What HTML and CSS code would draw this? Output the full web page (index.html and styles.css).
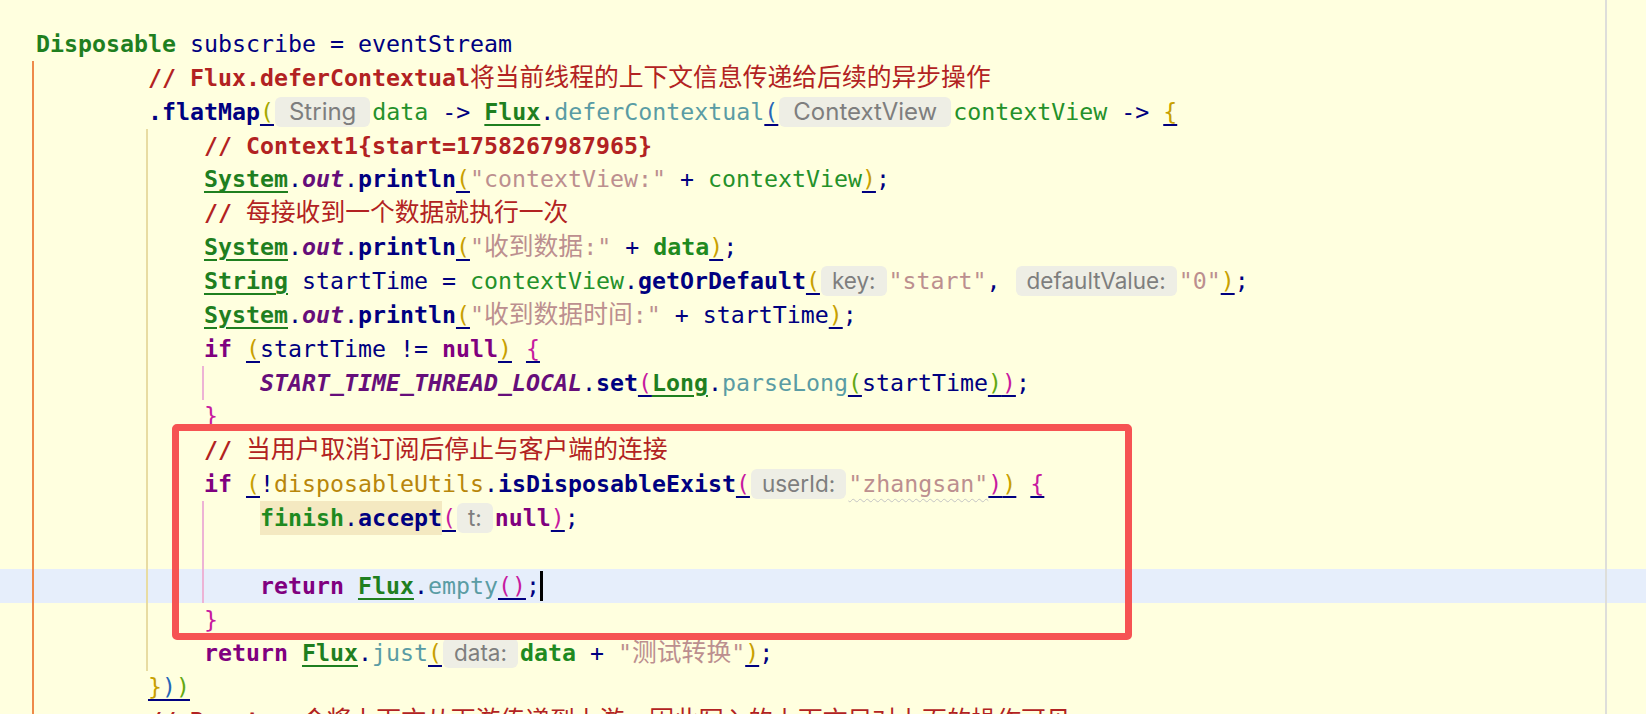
FILE: index.html
```html
<!DOCTYPE html>
<html lang="zh">
<head>
<meta charset="utf-8">
<title>Editor</title>
<link rel="stylesheet" href="styles.css">
</head>
<body>
<div class="editor">
  <div class="code">
    <div class="ln"><span class="clsn">Disposable</span> subscribe = eventStream</div>
    <div class="ln">        <span class="cm">// Flux.deferContextual<span class="cjk">将当前线程的上下文信息传递给后续的异步操作</span></span></div>
    <div class="ln">        <span class="mth">.flatMap</span><span class="p po">(</span><span class="inlay type">String</span><span class="prm">data</span> -&gt; <span class="cls">Flux</span>.<span class="smth">deferContextual</span><span class="p pb">(</span><span class="inlay type">ContextView</span><span class="prm">contextView</span> -&gt; <span class="p pg">{</span></div>
    <div class="ln">            <span class="cm">// Context1{start=1758267987965}</span></div>
    <div class="ln">            <span class="cls">System</span>.<span class="out">out</span>.<span class="mth">println</span><span class="p pg">(</span><span class="str">"contextView:"</span> + <span class="prm">contextView</span><span class="p pg">)</span>;</div>
    <div class="ln">            <span class="cm">// <span class="cjk">每接收到一个数据就执行一次</span></span></div>
    <div class="ln">            <span class="cls">System</span>.<span class="out">out</span>.<span class="mth">println</span><span class="p pg">(</span><span class="str">"<span class="cjk">收到数据</span>:"</span> + <span class="prmb">data</span><span class="p pg">)</span>;</div>
    <div class="ln">            <span class="cls">String</span> startTime = <span class="prm">contextView</span>.<span class="mth">getOrDefault</span><span class="p pg">(</span><span class="inlay">key:</span><span class="str">"start"</span>, <span class="inlay">defaultValue:</span><span class="str">"0"</span><span class="p pg">)</span>;</div>
    <div class="ln">            <span class="cls">System</span>.<span class="out">out</span>.<span class="mth">println</span><span class="p pg">(</span><span class="str">"<span class="cjk">收到数据时间</span>:"</span> + startTime<span class="p pg">)</span>;</div>
    <div class="ln">            <span class="kw">if</span> <span class="p pg">(</span>startTime != <span class="kw">null</span><span class="p pg">)</span> <span class="p pm">{</span></div>
    <div class="ln">                <span class="const">START_TIME_THREAD_LOCAL</span>.<span class="mth">set</span><span class="p pm">(</span><span class="cls">Long</span>.<span class="smth">parseLong</span><span class="p pgr">(</span>startTime<span class="p pgr">)</span><span class="p pm">)</span>;</div>
    <div class="ln">            <span class="pm">}</span></div>
    <div class="ln">            <span class="cm">// <span class="cjk">当用户取消订阅后停止与客户端的连接</span></span></div>
    <div class="ln">            <span class="kw">if</span> <span class="p pg">(</span>!<span class="fld">disposableUtils</span>.<span class="mth">isDisposableExist</span><span class="p pm">(</span><span class="inlay">userId:</span><span class="str wavy">"zhangsan"</span><span class="p pm">)</span><span class="p pg">)</span> <span class="p pm">{</span></div>
    <div class="ln">                <span class="hl"><span class="prmb">finish</span>.<span class="mth">accept</span></span><span class="p pm">(</span><span class="inlay">t:</span><span class="kw">null</span><span class="p pm">)</span>;</div>
    <div class="ln"> </div>
    <div class="ln current">                <span class="kw">return</span> <span class="cls">Flux</span>.<span class="smth">empty</span><span class="p pm">()</span>;<span class="caret"></span></div>
    <div class="ln">            <span class="pm">}</span></div>
    <div class="ln">            <span class="kw">return</span> <span class="cls">Flux</span>.<span class="smth">just</span><span class="p pg">(</span><span class="inlay">data:</span><span class="prmb">data</span> + <span class="str">"<span class="cjk">测试转换</span>"</span><span class="p pg">)</span>;</div>
    <div class="ln">        <span class="p pg">}</span><span class="p pb">)</span><span class="p pgr">)</span></div>
    <div class="ln">        <span class="cm">// Reactor <span class="cjk">会将上下文从下游传递到上游，因此写入的上下文只对上面的操作可见</span></span></div>
  </div>
  <div class="guide g-orange"></div>
  <div class="guide g-khaki"></div>
  <div class="guide g-pink g-pink1"></div>
  <div class="guide g-pink g-pink2"></div>
  <div class="margin-line"></div>
  <div class="annot"></div>
</div>
</body>
</html>
```

FILE: styles.css
```css
html, body {
  margin: 0;
  padding: 0;
  background: #FFFFDF;
}

.editor {
  position: relative;
  width: 1646px;
  height: 714px;
  overflow: hidden;
  background: #FFFFDF;
  font-family: "DejaVu Sans Mono", "Liberation Mono", monospace;
  font-size: 23.25px;
  color: #000080;
}

.code {
  padding-top: 27px;
}

.ln {
  height: 33.87px;
  line-height: 34px;
  white-space: pre;
  padding-left: 36px;
}

.ln.current {
  background: #E6EEFB;
}

/* token colours */
.clsn { color: #1F7F1F; font-weight: bold; }
.cls {
  color: #1F7F1F;
  font-weight: bold;
  text-decoration: underline;
  text-decoration-color: #1F7F1F;
  text-decoration-thickness: 2px;
  text-underline-offset: 4px;
}
.prm { color: #24912A; }
.prmb { color: #1F8A1F; font-weight: bold; }
.kw { color: #80007F; font-weight: bold; }
.cm { color: #B22222; font-weight: bold; }
.str { color: #BC8F8F; }
.fld { color: #B8860B; }
.mth { color: #000080; font-weight: bold; }
.smth { color: #5A9CA4; }
.out, .const { color: #660E7A; font-weight: bold; font-style: italic; }

.p {
  text-decoration: underline;
  text-decoration-color: #000080;
  text-decoration-thickness: 2px;
  text-underline-offset: 4px;
}
.po { color: #A5A800; }
.pg { color: #C8A000; }
.pb { color: #2566B8; }
.pm { color: #C71AA0; }
.pgr { color: #62A812; }

.cjk {
  font-family: "Noto Sans CJK SC", sans-serif;
  font-size: 24.8px;
  font-weight: normal;
  line-height: 1;
}

.wavy {
  text-decoration: underline wavy #C4C4C4;
  text-decoration-thickness: 1px;
  text-underline-offset: 6px;
}

.inlay {
  display: inline-block;
  vertical-align: top;
  margin: 2px 2px 0 1px;
  padding: 0 11px;
  height: 30px;
  line-height: 30px;
  border-radius: 6px;
  background: #EEEEE5;
  color: #7E7E7E;
  font-family: Inter, "Liberation Sans", sans-serif;
  font-size: 22.5px;
  font-weight: normal;
  font-style: normal;
}

.inlay.type {
  padding: 0 14px;
  font-size: 24px;
}

.hl {
  display: inline-block;
  vertical-align: top;
  line-height: 34px;
  height: 34px;
  background: #F4E9C1;
}

.caret {
  display: inline-block;
  vertical-align: top;
  width: 3px;
  height: 30px;
  margin-top: 2px;
  background: #000000;
}

/* indent guides and overlays */
.guide {
  position: absolute;
  width: 2px;
}
.g-orange {
  left: 32px;
  top: 61px;
  bottom: 0;
  background: #EE8A4A;
}
.g-khaki {
  left: 146px;
  top: 129px;
  height: 542px;
  background: #E8DCA2;
}
.g-pink { left: 202px; background: #EDB3D5; }
.g-pink1 { top: 366px; height: 34px; }
.g-pink2 { top: 501px; height: 102px; }

.margin-line {
  position: absolute;
  left: 1605px;
  top: 0;
  bottom: 0;
  width: 2px;
  background: #DEDEDA;
}

.annot {
  position: absolute;
  left: 172px;
  top: 424px;
  width: 960px;
  height: 216px;
  box-sizing: border-box;
  border: 7px solid #F65353;
  border-radius: 5px;
}
```
